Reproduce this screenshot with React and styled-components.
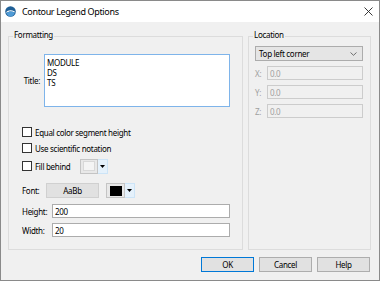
import styled, { createGlobalStyle } from 'styled-components';

const GlobalStyle = createGlobalStyle`
  html, body {
    margin: 0;
    padding: 0;
    background: #f0f0f0;
  }
  body {
    font-family: "Noto Sans", "Liberation Sans", sans-serif;
    font-size: 8px;
    letter-spacing: -0.3px;
    color: #000;
  }
  * {
    box-sizing: border-box;
  }
`;

const Window = styled.div`
  width: 380px;
  height: 281px;
  border: 1px solid #8a8a8a;
  display: flex;
  flex-direction: column;
  background: #f0f0f0;
`;

const TitleBar = styled.div`
  height: 21px;
  flex-shrink: 0;
  background: #fff;
  display: flex;
  align-items: center;
  padding: 0 6px 0 4px;
  gap: 6px;
`;

const TitleText = styled.span`
  flex: 1;
  font-size: 9px;
  letter-spacing: -0.35px;
  color: #000;
`;

const Body = styled.div`
  flex: 1;
  display: flex;
  flex-direction: column;
  padding: 14px 8px 0 7px;
`;

const Groups = styled.div`
  display: flex;
  gap: 5px;
  height: 214px;
`;

const GroupBox = styled.div`
  position: relative;
  width: ${(p) => p.$width}px;
  height: 100%;
  border: 1px solid #dcdcdc;
  padding: ${(p) => p.$pad};
  display: flex;
  flex-direction: column;
`;

const Caption = styled.span`
  position: absolute;
  top: -8px;
  left: 4px;
  padding: 0 1px;
  line-height: 11px;
  background: #f0f0f0;
`;

const TitleRow = styled.div`
  display: flex;
  align-items: center;
  height: 53px;
`;

const SideLabel = styled.span`
  width: ${(p) => p.$w}px;
  flex-shrink: 0;
  text-align: ${(p) => (p.$right ? 'right' : 'left')};
  margin-right: ${(p) => p.$gap || 0}px;
  color: ${(p) => (p.$disabled ? '#a0a0a0' : '#000')};
`;

const TitleArea = styled.textarea`
  flex: 1;
  height: 100%;
  margin: 0;
  border: 1px solid #7eb4ea;
  background: #fff;
  padding: 3px 2px;
  font-family: inherit;
  font-size: 8px;
  letter-spacing: inherit;
  line-height: 10px;
  resize: none;
  overflow: hidden;
  outline: none;
`;

const CheckList = styled.div`
  display: flex;
  flex-direction: column;
  margin-top: 17px;
`;

const CheckRow = styled.div`
  display: flex;
  align-items: center;
  height: ${(p) => p.$h || 16}px;
`;

const Box = styled.span`
  width: 10px;
  height: 10px;
  border: 1px solid #333;
  background: #fff;
  margin-right: 3px;
  flex-shrink: 0;
`;

const Picker = styled.div`
  display: flex;
  height: 15px;
  margin-left: ${(p) => p.$ml || 0}px;
`;

const Swatch = styled.div`
  width: ${(p) => p.$w}px;
  height: 100%;
  border: 1px solid #c4c4c4;
  background: #e8e8e8;
  display: flex;
  align-items: center;
  justify-content: center;
`;

const SwatchColor = styled.span`
  width: 12px;
  height: 10px;
  background: ${(p) => p.$color};
  border: 1px solid ${(p) => (p.$color === '#000' ? '#000' : '#d8d8d8')};
`;

const Arrow = styled.div`
  width: 10px;
  height: 100%;
  background: #e5f1fb;
  border: 1px solid #cce4f7;
  border-left: none;
  display: flex;
  align-items: center;
  justify-content: center;
`;

const FieldRow = styled.div`
  display: flex;
  align-items: center;
  height: ${(p) => p.$h || 14}px;
  margin-top: ${(p) => p.$mt}px;
`;

const FontButton = styled.div`
  width: 53px;
  height: 100%;
  background: #e1e1e1;
  border: 1px solid #d0d0d0;
  display: flex;
  align-items: center;
  justify-content: center;
`;

const Input = styled.div`
  flex: 1;
  height: 100%;
  border: 1px solid ${(p) => (p.$disabled ? '#cccccc' : '#acacac')};
  background: ${(p) => (p.$disabled ? '#f0f0f0' : '#fff')};
  color: ${(p) => (p.$disabled ? '#a0a0a0' : '#000')};
  padding-left: 2px;
  display: flex;
  align-items: center;
`;

const Select = styled.div`
  height: 15px;
  margin-top: 9px;
  border: 1px solid #acacac;
  background: #e5e5e5;
  display: flex;
  align-items: center;
  justify-content: space-between;
  padding: 0 5px 0 3px;
`;

const ButtonRow = styled.div`
  display: flex;
  justify-content: flex-end;
  gap: 5px;
  margin-top: 7px;
  padding-right: 1px;
`;

const Button = styled.div`
  width: 53px;
  height: 15px;
  background: #e1e1e1;
  border: 1px solid ${(p) => (p.$primary ? '#0078d7' : '#adadad')};
  display: flex;
  align-items: center;
  justify-content: center;
`;

const AppIcon = () => (
  <svg width="11" height="11" viewBox="0 0 11 11">
    <circle cx="5.5" cy="5.5" r="5.3" fill="#1f5f96" />
    <path d="M1.2 6.2 C3 4.2 6 3.6 9.8 5.6 L9.8 6.4 C6.5 5 3.5 5.3 1.2 7 Z" fill="#fff" />
    <path d="M1.3 7 C3.5 5.4 6.5 5 9.8 6.4 C9.2 8.8 7.5 10.4 5.5 10.4 C3.5 10.4 1.9 9 1.3 7 Z" fill="#4f9bd6" />
  </svg>
);

const CloseIcon = () => (
  <svg width="9" height="9" viewBox="0 0 9 9">
    <path d="M0.5 0.5 L8.5 8.5 M8.5 0.5 L0.5 8.5" stroke="#222" strokeWidth="0.9" />
  </svg>
);

const DownTri = () => (
  <svg width="5" height="3" viewBox="0 0 5 3">
    <path d="M0 0 H5 L2.5 3 Z" fill="#000" />
  </svg>
);

const Chevron = () => (
  <svg width="7" height="4" viewBox="0 0 7 4">
    <path d="M0.5 0.5 L3.5 3.3 L6.5 0.5" stroke="#606060" strokeWidth="0.9" fill="none" />
  </svg>
);

const App = () => {
  return (
    <>
      <GlobalStyle />
      <Window>
        <TitleBar>
          <AppIcon />
          <TitleText>Contour Legend Options</TitleText>
          <CloseIcon />
        </TitleBar>
        <Body>
          <Groups>
            <GroupBox $width={235} $pad="17px 12px 0 13px">
              <Caption>Formatting</Caption>
              <TitleRow>
                <SideLabel $w={18} $right $gap={4}>Title:</SideLabel>
                <TitleArea readOnly defaultValue={'MODULE\nDS\nTS'} />
              </TitleRow>
              <CheckList>
                <CheckRow>
                  <Box />
                  <span>Equal color segment height</span>
                </CheckRow>
                <CheckRow>
                  <Box />
                  <span>Use scientific notation</span>
                </CheckRow>
                <CheckRow $h={20}>
                  <Box />
                  <span>Fill behind</span>
                  <Picker $ml={10}>
                    <Swatch $w={18}>
                      <SwatchColor $color="#f4f4f4" />
                    </Swatch>
                    <Arrow>
                      <DownTri />
                    </Arrow>
                  </Picker>
                </CheckRow>
              </CheckList>
              <FieldRow $h={15} $mt={7}>
                <SideLabel $w={24}>Font:</SideLabel>
                <FontButton>AaBb</FontButton>
                <Picker $ml={7}>
                  <Swatch $w={19}>
                    <SwatchColor $color="#000" />
                  </Swatch>
                  <Arrow>
                    <DownTri />
                  </Arrow>
                </Picker>
              </FieldRow>
              <FieldRow $mt={6}>
                <SideLabel $w={30}>Height:</SideLabel>
                <Input>200</Input>
              </FieldRow>
              <FieldRow $mt={5}>
                <SideLabel $w={30}>Width:</SideLabel>
                <Input>20</Input>
              </FieldRow>
            </GroupBox>
            <GroupBox $width={123} $pad="0 7px 0 6px">
              <Caption>Location</Caption>
              <Select>
                <span>Top left corner</span>
                <Chevron />
              </Select>
              {['X', 'Y', 'Z'].map((axis) => (
                <FieldRow key={axis} $mt={5}>
                  <SideLabel $w={12} $disabled>{axis}:</SideLabel>
                  <Input $disabled>0.0</Input>
                </FieldRow>
              ))}
            </GroupBox>
          </Groups>
          <ButtonRow>
            <Button $primary>OK</Button>
            <Button>Cancel</Button>
            <Button>Help</Button>
          </ButtonRow>
        </Body>
      </Window>
    </>
  );
};

export default App;
